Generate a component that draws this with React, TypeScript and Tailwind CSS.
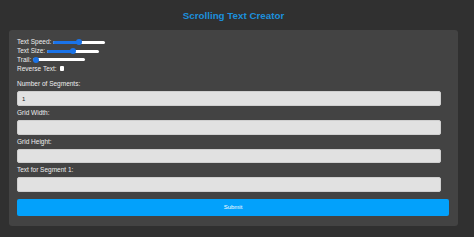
import { useState } from "react";

function Slider({ width, value }: { width: number; value: number }) {
  return (
    <span className="relative inline-flex items-center h-[6px] align-middle" style={{ width }}>
      <span className="absolute inset-x-0 h-[3px] rounded-full bg-white" />
      <span className="absolute left-0 h-[3px] rounded-full bg-[#1a73e8]" style={{ width: `${value}%` }} />
      <span
        className="absolute w-[6px] h-[6px] -ml-[3px] rounded-full bg-[#1a73e8]"
        style={{ left: `calc(${value}% + ${3 - (value / 100) * 6}px)` }}
      />
    </span>
  );
}

function Field({ label, value }: { label: string; value?: string }) {
  return (
    <div className="flex flex-col">
      <label className="h-[8px] leading-[8px] mb-[3px]">{label}</label>
      <input
        readOnly
        value={value ?? ""}
        className="h-[14.7px] mb-[3px] mr-[8px] rounded-[2px] border border-[#cfcfcf] bg-[#e1e1e1] px-[4px] text-[6px] text-[#222] outline-none"
      />
    </div>
  );
}

export default function App() {
  const [reverse] = useState(false);

  return (
    <div
      className="w-[474px] h-[237px] bg-[#303030] pl-[9px] pr-[16px] overflow-hidden text-[6.5px] text-[#eeeeee]"
      style={{ fontFamily: '"Liberation Sans", Arial, sans-serif' }}
    >
      <h1 className="h-[30px] pt-[9px] text-center text-[9.8px] leading-[14px] font-bold text-[#1c8fdc]">
        Scrolling Text Creator
      </h1>
      <div className="h-[196px] rounded-[3px] bg-[#434343] pl-[8px] pr-[9px] pt-[8px]">
        <div className="flex h-[8.7px] items-center gap-[2px]">
          <span>Text Speed:</span>
          <Slider width={52} value={50} />
        </div>
        <div className="flex h-[8.7px] items-center gap-[2px]">
          <span>Text Size:</span>
          <Slider width={52} value={50} />
        </div>
        <div className="flex h-[8.7px] items-center gap-[2px]">
          <span>Trail:</span>
          <Slider width={52} value={0} />
        </div>
        <div className="flex h-[8.7px] items-center gap-[3px]">
          <span>Reverse Text:</span>
          <span className={`inline-block w-[4.5px] h-[4.5px] rounded-[1px] ${reverse ? "bg-[#1a73e8]" : "bg-white"}`} />
        </div>
        <div className="mt-[7.5px]">
          <Field label="Number of Segments:" value="1" />
          <Field label="Grid Width:" />
          <Field label="Grid Height:" />
          <Field label="Text for Segment 1:" />
        </div>
        <button className="mt-[3.7px] w-full h-[17.3px] rounded-[2px] bg-[#03a1fb] text-[6px] text-white">
          Submit
        </button>
      </div>
    </div>
  );
}
